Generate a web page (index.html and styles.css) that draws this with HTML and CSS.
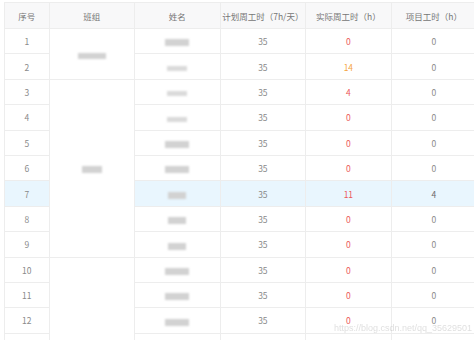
FILE: index.html
```html
<!DOCTYPE html>
<html lang="zh">
<head>
<meta charset="utf-8">
<link rel="stylesheet" href="styles.css">
</head>
<body>
<div class="wrap">
<table class="grid">
  <colgroup>
    <col class="c-idx"><col class="c"><col class="c"><col class="c"><col class="c"><col class="c">
  </colgroup>
  <thead>
    <tr><th>序号</th><th>班组</th><th>姓名</th><th>计划周工时（7h/天）</th><th>实际周工时（h）</th><th>项目工时（h）</th></tr>
  </thead>
  <tbody>
    <tr><td>1</td><td rowspan="2" class="grp"><span class="blur b-grp1"></span></td><td><span class="blur b1"></span></td><td>35</td><td class="red">0</td><td>0</td></tr>
    <tr><td>2</td><td><span class="blur b2"></span></td><td>35</td><td class="orange">14</td><td>0</td></tr>
    <tr><td>3</td><td rowspan="7" class="grp"><span class="blur b-grp2"></span></td><td><span class="blur b2"></span></td><td>35</td><td class="red">4</td><td>0</td></tr>
    <tr><td>4</td><td><span class="blur b2"></span></td><td>35</td><td class="red">0</td><td>0</td></tr>
    <tr><td>5</td><td><span class="blur b1"></span></td><td>35</td><td class="red">0</td><td>0</td></tr>
    <tr><td>6</td><td><span class="blur b1"></span></td><td>35</td><td class="red">0</td><td>0</td></tr>
    <tr class="hl"><td>7</td><td><span class="blur b3"></span></td><td>35</td><td class="red">11</td><td class="dark">4</td></tr>
    <tr><td>8</td><td><span class="blur b3"></span></td><td>35</td><td class="red">0</td><td>0</td></tr>
    <tr><td>9</td><td><span class="blur b3"></span></td><td>35</td><td class="red">0</td><td>0</td></tr>
    <tr><td>10</td><td rowspan="4" class="grp"></td><td><span class="blur b1"></span></td><td>35</td><td class="red">0</td><td>0</td></tr>
    <tr><td>11</td><td><span class="blur b1"></span></td><td>35</td><td class="red">0</td><td>0</td></tr>
    <tr><td>12</td><td><span class="blur b1"></span></td><td>35</td><td class="red">0</td><td>0</td></tr>
    <tr><td></td><td></td><td></td><td></td><td></td></tr>
  </tbody>
</table>
<div class="watermark">https://blog.csdn.net/qq_35629501</div>
</div>
</body>
</html>
```
FILE: styles.css
```css
html, body {
  margin: 0;
  padding: 0;
  background: #fff;
  overflow: hidden;
}
.wrap {
  position: relative;
  width: 474px;
  height: 340px;
  overflow: hidden;
}
.grid {
  margin: 2px 0 0 4px;
  border-collapse: collapse;
  table-layout: fixed;
  width: 472px;
  font-family: "Noto Sans CJK SC", "Noto Sans", sans-serif;
  font-size: 8.5px;
  color: #8a8a8a;
}
.c-idx { width: 44.6px; }
.c { width: 85.5px; }
th, td {
  border: 1px solid #ededed;
  text-align: center;
  padding: 0;
  overflow: hidden;
  white-space: nowrap;
}
th {
  background: #f8f8f9;
  color: #767676;
  font-weight: normal;
  height: 25px;
}
tbody tr {
  height: 25.4px;
}
td { height: 24.4px; }
.grp { background: #fff; }
tr.hl td:not(.grp) { background: #e9f6fe; }
.red { color: #ec5a5a; }
.orange { color: #f5a543; }
.dark { color: #6b6b6b; }
.blur {
  display: inline-block;
  vertical-align: middle;
  background: #d2d2d2;
  filter: blur(1px);
  height: 7px;
}
.b1 { width: 24px; }
.b2 { width: 20px; height: 5px; background: #dadada; }
.b3 { width: 18px; }
.b-grp1 { width: 28px; height: 6px; }
.b-grp2 { width: 20px; height: 7px; }
.watermark {
  position: absolute;
  left: 334px;
  top: 323px;
  font-family: "Liberation Sans", sans-serif;
  font-size: 9px;
  color: rgba(150, 150, 150, 0.3);
  filter: blur(0.4px);
}
```
